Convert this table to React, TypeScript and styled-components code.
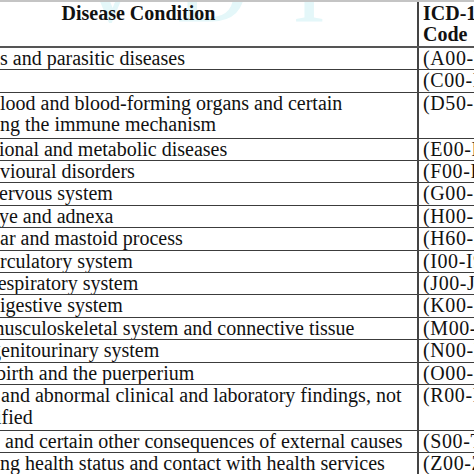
import styled, { createGlobalStyle } from "styled-components";

const GlobalStyle = createGlobalStyle`
    html, body {
        margin: 0;
        padding: 0;
        background: #ffffff;
        overflow: hidden;
    }
`;

const Frame = styled.div`
    position: relative;
    width: 474px;
    height: 474px;
    overflow: hidden;
    background: #ffffff;
    border-top: 2px solid #c4c4c4;
    box-sizing: border-box;
    font-family: "Liberation Serif", "DejaVu Serif", serif;
    color: #111111;
`;

const Watermark = styled.div`
    position: absolute;
    top: -64px;
    left: 74px;
    display: flex;
    gap: 30px;
    font-size: 100px;
    line-height: 1;
    color: #e4f7f9;
    pointer-events: none;
    span:last-child {
        margin-left: 14px;
    }
`;

const Table = styled.table`
    position: relative;
    border-collapse: collapse;
    table-layout: fixed;
    width: 540px;
`;

const Col = styled.col<{ $w: number }>`
    width: ${(p) => p.$w}px;
`;

const HeadCell = styled.th<{ $first?: boolean }>`
    vertical-align: top;
    text-align: ${(p) => (p.$first ? "center" : "left")};
    font-size: 20px;
    font-weight: 700;
    line-height: 21px;
    padding: ${(p) => (p.$first ? "1px 140px 1px 0" : "1px 0 1px 4px")};
    border-bottom: 2px solid #555555;
    border-right: ${(p) => (p.$first ? "2px solid #444444" : "none")};
    white-space: nowrap;
    height: 42px;
    box-sizing: border-box;
`;

const Cell = styled.td<{ $indent?: number; $tall?: boolean }>`
    vertical-align: top;
    font-size: 20px;
    line-height: 21.4px;
    padding: 0 0 ${(p) => (p.$tall ? "2px" : "0")} 0;
    border-bottom: 1px solid #3c3c3c;
    white-space: nowrap;
    overflow: hidden;
    span {
        display: block;
        text-indent: ${(p) => p.$indent ?? 0}px;
    }
`;

const CodeCell = styled.td`
    vertical-align: top;
    font-size: 20px;
    line-height: 21.4px;
    letter-spacing: 0.6px;
    padding: 0 0 0 4px;
    border-bottom: 1px solid #3c3c3c;
    border-left: 2px solid #444444;
    white-space: nowrap;
    overflow: hidden;
`;

type Row = { lines: string[]; code: string; indent?: number };

const rows: Row[] = [
    { lines: ["s and parasitic diseases"], code: "(A00-B99)" },
    { lines: [""], code: "(C00-D48)" },
    { lines: ["lood and blood-forming organs and certain", "ng the immune mechanism"], code: "(D50-D89)" },
    { lines: ["ional and metabolic diseases"], code: "(E00-E90)", indent: -1 },
    { lines: ["avioural disorders"], code: "(F00-F99)", indent: -9 },
    { lines: ["nervous system"], code: "(G00-G99)", indent: -11 },
    { lines: ["eye and adnexa"], code: "(H00-H59)", indent: -10 },
    { lines: ["ar and mastoid process"], code: "(H60-H95)" },
    { lines: ["rculatory system"], code: "(I00-I99)" },
    { lines: ["respiratory system"], code: "(J00-J99)", indent: -9 },
    { lines: ["digestive system"], code: "(K00-K93)", indent: -10 },
    { lines: ["musculoskeletal system and connective tissue"], code: "(M00-M99)", indent: -11 },
    { lines: ["genitourinary system"], code: "(N00-N99)", indent: -9 },
    { lines: ["birth and the puerperium"], code: "(O00-O99)", indent: -4 },
    { lines: ["\u00a0and abnormal clinical and laboratory findings, not", "ified"], code: "(R00-R99)", indent: -4 },
    { lines: ["\u00a0and certain other consequences of external causes"], code: "(S00-T98)" },
    { lines: ["ng health status and contact with health services"], code: "(Z00-Z99)" },
];

const App = (): JSX.Element => {
    return (
        <Frame>
            <GlobalStyle />
            <Watermark aria-hidden>
                <span>V</span>
                <span>D</span>
                <span>I</span>
            </Watermark>
            <Table>
                <colgroup>
                    <Col $w={418} />
                    <Col $w={122} />
                </colgroup>
                <thead>
                    <tr>
                        <HeadCell $first>Disease Condition</HeadCell>
                        <HeadCell>
                            ICD-10
                            <br />
                            Code
                        </HeadCell>
                    </tr>
                </thead>
                <tbody>
                    {rows.map((r) => (
                        <tr key={r.code}>
                            <Cell $indent={r.indent} $tall={r.lines.length > 1}>
                                {r.lines.map((l, i) => (
                                    <span key={i}>{l || "\u00a0"}</span>
                                ))}
                            </Cell>
                            <CodeCell>{r.code}</CodeCell>
                        </tr>
                    ))}
                </tbody>
            </Table>
        </Frame>
    );
};

export default App;
